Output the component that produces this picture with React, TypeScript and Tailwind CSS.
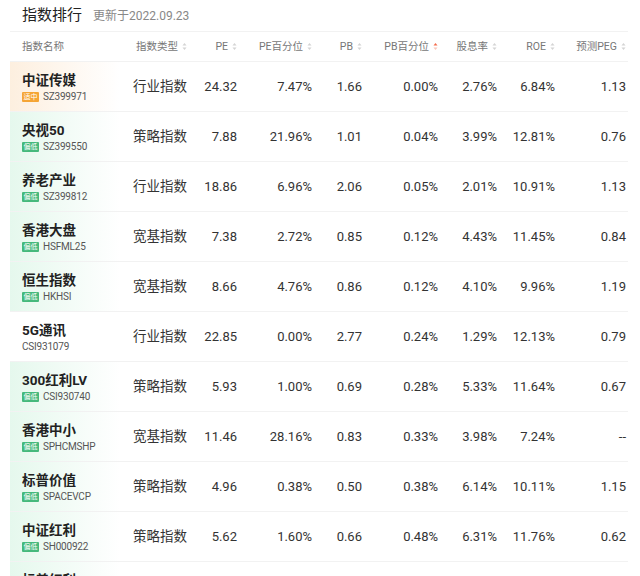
import React from 'react';

type Row = {
  name: string;
  code: string;
  tag?: 'mid' | 'low';
  type: string;
  pe: string;
  pePct: string;
  pb: string;
  pbPct: string;
  dy: string;
  roe: string;
  peg: string;
};

const rows: Row[] = [
  { name: '中证传媒', code: 'SZ399971', tag: 'mid', type: '行业指数', pe: '24.32', pePct: '7.47%', pb: '1.66', pbPct: '0.00%', dy: '2.76%', roe: '6.84%', peg: '1.13' },
  { name: '央视50', code: 'SZ399550', tag: 'low', type: '策略指数', pe: '7.88', pePct: '21.96%', pb: '1.01', pbPct: '0.04%', dy: '3.99%', roe: '12.81%', peg: '0.76' },
  { name: '养老产业', code: 'SZ399812', tag: 'low', type: '行业指数', pe: '18.86', pePct: '6.96%', pb: '2.06', pbPct: '0.05%', dy: '2.01%', roe: '10.91%', peg: '1.13' },
  { name: '香港大盘', code: 'HSFML25', tag: 'low', type: '宽基指数', pe: '7.38', pePct: '2.72%', pb: '0.85', pbPct: '0.12%', dy: '4.43%', roe: '11.45%', peg: '0.84' },
  { name: '恒生指数', code: 'HKHSI', tag: 'low', type: '宽基指数', pe: '8.66', pePct: '4.76%', pb: '0.86', pbPct: '0.12%', dy: '4.10%', roe: '9.96%', peg: '1.19' },
  { name: '5G通讯', code: 'CSI931079', type: '行业指数', pe: '22.85', pePct: '0.00%', pb: '2.77', pbPct: '0.24%', dy: '1.29%', roe: '12.13%', peg: '0.79' },
  { name: '300红利LV', code: 'CSI930740', tag: 'low', type: '策略指数', pe: '5.93', pePct: '1.00%', pb: '0.69', pbPct: '0.28%', dy: '5.33%', roe: '11.64%', peg: '0.67' },
  { name: '香港中小', code: 'SPHCMSHP', tag: 'low', type: '宽基指数', pe: '11.46', pePct: '28.16%', pb: '0.83', pbPct: '0.33%', dy: '3.98%', roe: '7.24%', peg: '--' },
  { name: '标普价值', code: 'SPACEVCP', tag: 'low', type: '策略指数', pe: '4.96', pePct: '0.38%', pb: '0.50', pbPct: '0.38%', dy: '6.14%', roe: '10.11%', peg: '1.15' },
  { name: '中证红利', code: 'SH000922', tag: 'low', type: '策略指数', pe: '5.62', pePct: '1.60%', pb: '0.66', pbPct: '0.48%', dy: '6.31%', roe: '11.76%', peg: '0.62' },
  { name: '标普红利', code: 'SPHDSPC', tag: 'low', type: '策略指数', pe: '6.10', pePct: '2.05%', pb: '0.71', pbPct: '0.52%', dy: '5.86%', roe: '11.02%', peg: '0.88' },
];

const grid = 'grid grid-cols-[110px_67px_50px_75px_50px_76px_59px_58px_71px] pr-[2px]';

const SortIcon = ({ active }: { active?: boolean }) => (
  <svg width="5" height="9" viewBox="0 0 5 9" className="ml-[4px] shrink-0">
    <path d="M2.5 1 L4.5 3.6 L0.5 3.6 Z" fill={active ? '#f56c4c' : '#d4d4d4'} />
    <path d="M2.5 8 L4.5 5.4 L0.5 5.4 Z" fill={active ? '#f8c7bb' : '#d4d4d4'} />
  </svg>
);

const headers = [
  { label: '指数类型' },
  { label: 'PE' },
  { label: 'PE百分位' },
  { label: 'PB' },
  { label: 'PB百分位', active: true },
  { label: '股息率' },
  { label: 'ROE' },
  { label: '预测PEG' },
];

export default function App() {
  return (
    <div className="w-[640px] bg-white text-[#333]" style={{ fontFamily: 'Roboto, "Noto Sans CJK SC", sans-serif' }}>
      <div className="h-[31px] flex items-center pl-[22px] gap-[11px]">
        <span className="text-[15px] text-[#222]">指数排行</span>
        <span className="text-[12px] text-[#888] mt-[1px]">更新于2022.09.23</span>
      </div>

      <div className="ml-[10px] w-[618px]">
        <div className={`${grid} h-[31px] items-center border-t border-b border-[#f2f2f2] text-[10.5px] text-[#777]`}>
          <div className="pl-[12px]">指数名称</div>
          {headers.map(h => (
            <div key={h.label} className="flex items-center justify-end">
              <span>{h.label}</span>
              <SortIcon active={h.active} />
            </div>
          ))}
        </div>

        {rows.map(r => (
          <div key={r.code} className={`${grid} h-[50px] items-center border-b border-[#f2f2f2] text-[13px]`}>
            <div
              className={`h-full pl-[12px] flex flex-col justify-center bg-gradient-to-r ${
                r.tag === 'mid' ? 'from-[#fdefdf] to-white' : r.tag === 'low' ? 'from-[#e5f8ed] to-white' : 'from-white to-white'
              }`}
            >
              <div className="text-[13.5px] font-bold text-[#222] leading-[18px]">{r.name}</div>
              <div className="flex items-center gap-[4px] mt-[2px]">
                {r.tag && (
                  <span
                    className={`w-[17px] h-[10px] rounded-[1px] text-white text-[7px] leading-[10px] text-center ${
                      r.tag === 'mid' ? 'bg-[#f5a535]' : 'bg-[#45b97c]'
                    }`}
                  >
                    {r.tag === 'mid' ? '适中' : '偏低'}
                  </span>
                )}
                <span className="text-[10px] text-[#555] leading-[12px] tracking-[-0.2px]">{r.code}</span>
              </div>
            </div>
            <div className="text-right text-[13.5px] text-[#333]">{r.type}</div>
            <div className="text-right">{r.pe}</div>
            <div className="text-right">{r.pePct}</div>
            <div className="text-right">{r.pb}</div>
            <div className="text-right">{r.pbPct}</div>
            <div className="text-right">{r.dy}</div>
            <div className="text-right">{r.roe}</div>
            <div className="text-right">{r.peg}</div>
          </div>
        ))}
      </div>
    </div>
  );
}
